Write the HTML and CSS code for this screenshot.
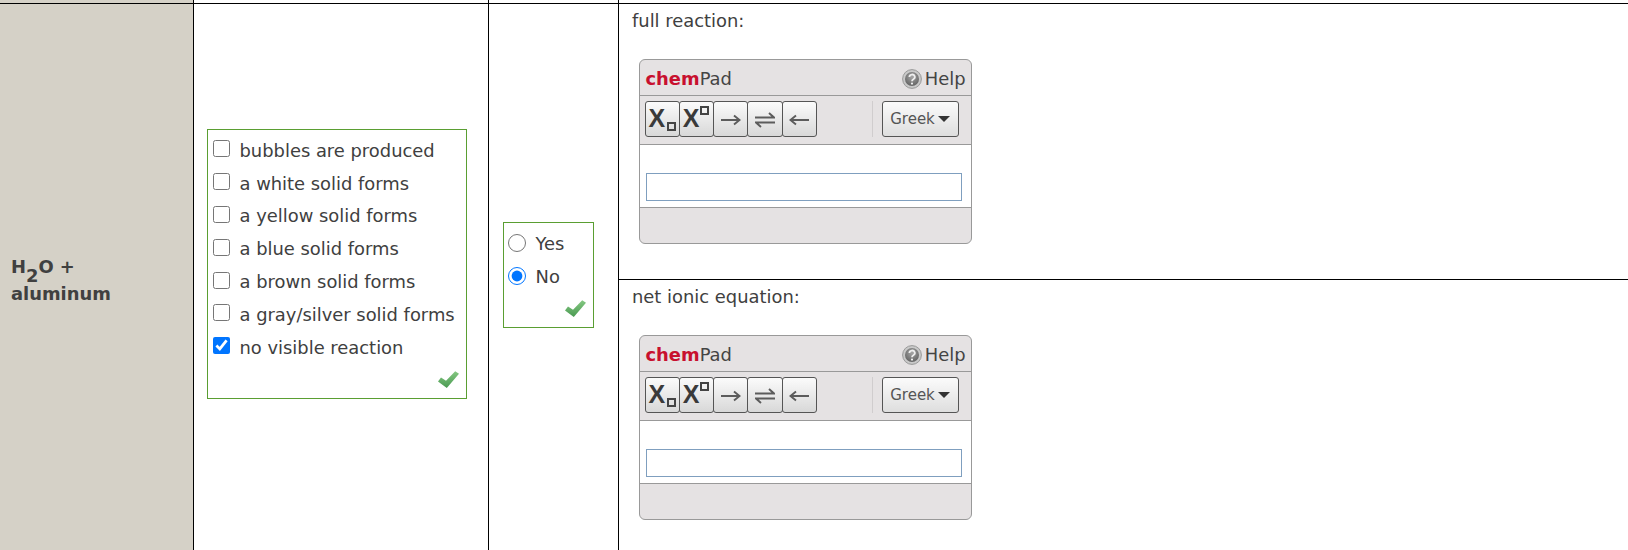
FILE: index.html
```html
<!DOCTYPE html>
<html lang="en">
<head>
<meta charset="utf-8">
<title>Reaction table</title>
<link rel="stylesheet" href="styles.css">
</head>
<body>
<svg class="defs" width="0" height="0" aria-hidden="true">
  <defs>
    <linearGradient id="chk" x1="0" y1="0" x2="0" y2="1"><stop offset="0" stop-color="#85c882"/><stop offset="1" stop-color="#4a9a52"/></linearGradient>
    <symbol id="check" viewBox="0 0 21 17"><path d="M0 10.5 L3 6.6 L8 9.8 L17.2 0.2 L21 2.8 L8.8 17 Z" fill="url(#chk)"/></symbol>
    <symbol id="r-arrow" viewBox="0 0 20 12"><path d="M0 6H18M13 1.5 18.5 6 13 10.5" fill="none" stroke="#5c5c5c" stroke-width="1.9"/></symbol>
    <symbol id="l-arrow" viewBox="0 0 20 12"><path d="M20 6H2M7 1.5 1.5 6 7 10.5" fill="none" stroke="#5c5c5c" stroke-width="1.9"/></symbol>
    <symbol id="eq-arrow" viewBox="0 0 20 16"><path d="M0 5.5H19L14 1M20 10.5H1L6 15" fill="none" stroke="#5c5c5c" stroke-width="1.9"/></symbol>
    <radialGradient id="hg" cx=".5" cy=".35" r=".7"><stop offset="0" stop-color="#a5a5a5"/><stop offset="1" stop-color="#5e5e5e"/></radialGradient>
    <symbol id="help" viewBox="0 0 20 20"><circle cx="10" cy="10" r="9.4" fill="#c9c9c9" stroke="#999" stroke-width="1"/><circle cx="10" cy="10" r="7" fill="url(#hg)"/><path d="M7.4 8a2.7 2.5 0 1 1 4 2.2c-1 .6-1.4 1-1.4 2" fill="none" stroke="#eee" stroke-width="1.8"/><circle cx="10" cy="14.6" r="1.1" fill="#eee"/></symbol>
  </defs>
</svg>
<table class="grid">
  <colgroup><col class="c1"><col class="c2"><col class="c3"><col class="c4"></colgroup>
  <tr class="prev"><td class="label"></td><td></td><td></td><td class="eq"></td></tr>
  <tr class="half-top">
    <th class="label" rowspan="2">H<sub>2</sub>O +<br>aluminum</th>
    <td class="obs" rowspan="2">
      <div class="answers answers-obs">
        <label class="opt"><input type="checkbox"><span>bubbles are produced</span></label>
        <label class="opt"><input type="checkbox"><span>a white solid forms</span></label>
        <label class="opt"><input type="checkbox"><span>a yellow solid forms</span></label>
        <label class="opt"><input type="checkbox"><span>a blue solid forms</span></label>
        <label class="opt"><input type="checkbox"><span>a brown solid forms</span></label>
        <label class="opt"><input type="checkbox"><span>a gray/silver solid forms</span></label>
        <label class="opt"><input type="checkbox" checked><span>no visible reaction</span></label>
        <div class="mark"><svg class="mark-icon"><use href="#check"/></svg></div>
      </div>
    </td>
    <td class="yn" rowspan="2">
      <div class="answers answers-yn">
        <label class="opt"><input type="radio" name="r"><span>Yes</span></label>
        <label class="opt"><input type="radio" name="r" checked><span>No</span></label>
        <div class="mark"><svg class="mark-icon"><use href="#check"/></svg></div>
      </div>
    </td>
    <td class="eq">
      <p class="eq-title">full reaction:</p>
      <div class="chempad">
        <div class="cp-head"><span class="brand"><b>chem</b>Pad</span><span class="help"><svg class="help-icon"><use href="#help"/></svg>Help</span></div>
        <div class="cp-tools">
          <div class="btn-group">
            <button class="tool tool-x" type="button">X<i class="box box-sub"></i></button>
            <button class="tool tool-x" type="button">X<i class="box box-sup"></i></button>
            <button class="tool" type="button"><svg class="arrow"><use href="#r-arrow"/></svg></button>
            <button class="tool" type="button"><svg class="arrow arrow-eq"><use href="#eq-arrow"/></svg></button>
            <button class="tool" type="button"><svg class="arrow"><use href="#l-arrow"/></svg></button>
          </div>
          <span class="sep"></span>
          <button class="greek" type="button">Greek<i class="caret"></i></button>
        </div>
        <div class="cp-body"><div class="cp-input"></div></div>
        <div class="cp-foot"></div>
      </div>
    </td>
  </tr>
  <tr class="half-bottom">
    <td class="eq">
      <p class="eq-title">net ionic equation:</p>
      <div class="chempad">
        <div class="cp-head"><span class="brand"><b>chem</b>Pad</span><span class="help"><svg class="help-icon"><use href="#help"/></svg>Help</span></div>
        <div class="cp-tools">
          <div class="btn-group">
            <button class="tool tool-x" type="button">X<i class="box box-sub"></i></button>
            <button class="tool tool-x" type="button">X<i class="box box-sup"></i></button>
            <button class="tool" type="button"><svg class="arrow"><use href="#r-arrow"/></svg></button>
            <button class="tool" type="button"><svg class="arrow arrow-eq"><use href="#eq-arrow"/></svg></button>
            <button class="tool" type="button"><svg class="arrow"><use href="#l-arrow"/></svg></button>
          </div>
          <span class="sep"></span>
          <button class="greek" type="button">Greek<i class="caret"></i></button>
        </div>
        <div class="cp-body"><div class="cp-input"></div></div>
        <div class="cp-foot"></div>
      </div>
    </td>
  </tr>
</table>
</body>
</html>
```
FILE: styles.css
```css
html, body { margin: 0; height: 550px; overflow: hidden; background: #fff; }
body { font-family: "DejaVu Sans", Verdana, sans-serif; font-size: 17.9px; color: #404040; }
.defs { position: absolute; }
.grid { border-collapse: collapse; table-layout: fixed; width: 1630px; }
.c1 { width: 193px; }
.c2 { width: 295px; }
.c3 { width: 130px; }
.grid td, .grid th { border: 1px solid #000; padding: 0; }
.grid td:first-child, .grid th:first-child { border-left: 0; }
.prev td { height: 3px; border-top: 0; }
.label { background: #d5d1c7; text-align: left; vertical-align: middle; padding-left: 11px !important; font-weight: bold; line-height: 27px; }
.label sub { font-size: inherit; line-height: 0; vertical-align: -9px; }
.obs, .yn { vertical-align: middle; }
.eq { vertical-align: top; border-right: 0 !important; }
.half-top .eq { height: 275px; }
.half-bottom .eq { height: 276px; }

.answers { border: 1px solid #5a9e32; box-sizing: border-box; }
.answers-obs { width: 260px; height: 270px; margin: 0 0 32px 13px; padding: 4px 0 0 5px; }
.answers-yn { width: 91px; height: 106px; margin: 0 0 10px 14px; padding: 4px 0 0 4px; }
.opt { display: flex; align-items: center; gap: 10px; height: 32.8px; }
.opt input { margin: 0; flex: none; }
.opt input[type="checkbox"] { width: 17px; height: 17px; margin-bottom: 3px; }
.opt input[type="radio"] { width: 18px; height: 18px; }
.mark { display: flex; justify-content: flex-end; padding: 7px 7px 0 0; }
.answers-yn .mark { padding-top: 7px; }
.mark-icon { width: 21px; height: 17px; display: block; }

.eq-title { margin: 0; padding: 7px 0 0 13.5px; line-height: 20px; height: 28px; }
.chempad { box-sizing: border-box; width: 333px; margin: 20px 0 0 20px; border: 1px solid #999; border-radius: 6px; background: #e5e2e3; overflow: hidden; height: 185px; }
.cp-head { display: flex; justify-content: space-between; align-items: center; height: 36px; padding: 2px 5px 0 6px; box-sizing: border-box; border-bottom: 1px solid #999; color: #444; }
.brand b { color: #c8102e; font-weight: bold; }
.help { display: flex; align-items: center; gap: 3px; }
.help-icon { width: 20px; height: 20px; display: block; }
.cp-tools { display: flex; align-items: center; height: 49px; box-sizing: border-box; border-bottom: 1px solid #999; padding: 0 12px 3px 5px; }
.btn-group { display: flex; }
.tool { width: 35.3px; height: 36px; box-sizing: border-box; margin: 0 -1px 0 0; padding: 0; border: 1px solid #555; border-radius: 3px; background: linear-gradient(#fbfbfb, #d8d8d8); position: relative; display: flex; align-items: center; justify-content: center; font-family: inherit; }
.tool-x { font-family: "Liberation Sans", sans-serif; font-size: 25px; font-weight: bold; color: #3a3a3a; justify-content: flex-start; padding-left: 3px; }
.box { position: absolute; width: 9px; height: 9px; box-sizing: border-box; border: 2px solid #444; }
.box-sub { right: 3px; bottom: 5px; }
.box-sup { right: 4px; top: 4px; }
.arrow { width: 20px; height: 12px; display: block; margin-top: 2px; }
.arrow-eq { height: 16px; }
.sep { width: 1px; height: 36px; background: #d0cdce; margin-left: auto; }
.greek { width: 77px; height: 36px; box-sizing: border-box; margin-left: 9px; padding: 0; border: 1px solid #555; border-radius: 3px; background: linear-gradient(#fbfbfb, #dedede); color: #555; font-family: "DejaVu Sans", sans-serif; font-size: 15px; display: flex; align-items: center; justify-content: center; gap: 3px; }
.caret { width: 0; height: 0; border: 6px solid transparent; border-top: 6px solid #333; border-bottom: 0; }
.cp-body { background: #fff; height: 63px; box-sizing: border-box; border-bottom: 1px solid #999; padding: 28px 9px 0 6px; }
.cp-input { height: 28px; box-sizing: border-box; border: 1px solid #7f9fbf; background: #fff; }
.cp-foot { height: 35px; }
```
